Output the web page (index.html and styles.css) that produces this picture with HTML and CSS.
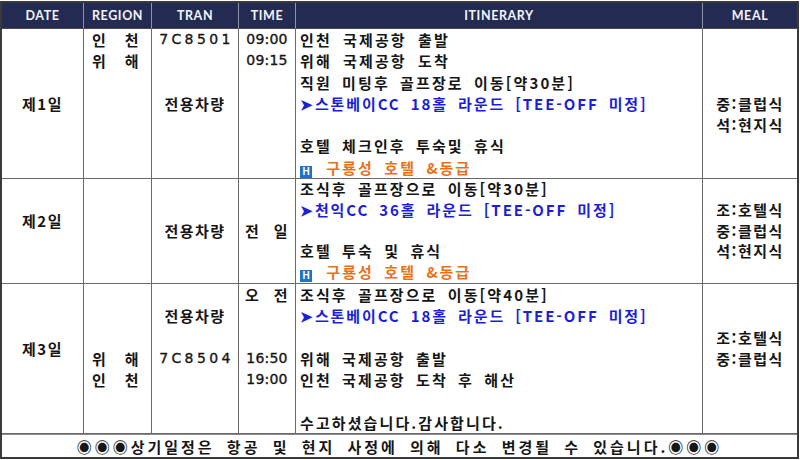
FILE: index.html
```html
<!DOCTYPE html>
<html lang="ko">
<head>
<meta charset="utf-8">
<title>일정표</title>
<link rel="stylesheet" href="styles.css">
</head>
<body>
<table class="sched">
  <colgroup>
    <col class="c-date"><col class="c-region"><col class="c-tran"><col class="c-time"><col class="c-itin"><col class="c-meal">
  </colgroup>
  <thead>
    <tr class="head">
      <th>DATE</th><th>REGION</th><th>TRAN</th><th>TIME</th><th>ITINERARY</th><th class="last">MEAL</th>
    </tr>
  </thead>
  <tbody>
    <tr class="r1">
      <td class="date">제1일</td>
      <td class="region">
        <div class="ln spread"><span>인</span><span>천</span></div>
        <div class="ln spread"><span>위</span><span>해</span></div>
      </td>
      <td class="tran">
        <div class="ln num">7C8501</div>
        <div class="ln"></div>
        <div class="ln"></div>
        <div class="ln">전용차량</div>
      </td>
      <td class="time">
        <div class="ln tnum">09:00</div>
        <div class="ln tnum">09:15</div>
      </td>
      <td class="itin">
        <div class="ln wide">인천 국제공항 출발</div>
        <div class="ln wide">위해 국제공항 도착</div>
        <div class="ln">직원 미팅후 골프장로 이동[약30분]</div>
        <div class="ln blue">➤스톤베이CC 18홀 라운드 [TEE-OFF 미정]</div>
        <div class="ln"></div>
        <div class="ln">호텔 체크인후 투숙및 휴식</div>
        <div class="ln orange"><span class="hicon">H</span> 구룡성 호텔 &amp;동급</div>
      </td>
      <td class="meal last">
        <div class="ln"></div>
        <div class="ln"></div>
        <div class="ln"></div>
        <div class="ln">중:클럽식</div>
        <div class="ln">석:현지식</div>
      </td>
    </tr>
    <tr class="r2">
      <td class="date shift">제2일</td>
      <td class="region"></td>
      <td class="tran">
        <div class="ln"></div>
        <div class="ln"></div>
        <div class="ln">전용차량</div>
      </td>
      <td class="time">
        <div class="ln"></div>
        <div class="ln"></div>
        <div class="ln spread tsp"><span>전</span><span>일</span></div>
      </td>
      <td class="itin">
        <div class="ln">조식후 골프장으로 이동[약30분]</div>
        <div class="ln blue">➤천익CC 36홀 라운드 [TEE-OFF 미정]</div>
        <div class="ln"></div>
        <div class="ln">호텔 투숙 및 휴식</div>
        <div class="ln orange"><span class="hicon">H</span> 구룡성 호텔 &amp;동급</div>
      </td>
      <td class="meal last">
        <div class="ln"></div>
        <div class="ln">조:호텔식</div>
        <div class="ln">중:클럽식</div>
        <div class="ln">석:현지식</div>
      </td>
    </tr>
    <tr class="r3">
      <td class="date shift">제3일</td>
      <td class="region">
        <div class="ln"></div>
        <div class="ln"></div>
        <div class="ln"></div>
        <div class="ln spread"><span>위</span><span>해</span></div>
        <div class="ln spread"><span>인</span><span>천</span></div>
      </td>
      <td class="tran">
        <div class="ln"></div>
        <div class="ln">전용차량</div>
        <div class="ln"></div>
        <div class="ln num">7C8504</div>
      </td>
      <td class="time">
        <div class="ln spread tsp"><span>오</span><span>전</span></div>
        <div class="ln"></div>
        <div class="ln"></div>
        <div class="ln tnum">16:50</div>
        <div class="ln tnum">19:00</div>
      </td>
      <td class="itin">
        <div class="ln">조식후 골프장으로 이동[약40분]</div>
        <div class="ln blue">➤스톤베이CC 18홀 라운드 [TEE-OFF 미정]</div>
        <div class="ln"></div>
        <div class="ln">위해 국제공항 출발</div>
        <div class="ln">인천 국제공항 도착 후 해산</div>
        <div class="ln"></div>
        <div class="ln">수고하셨습니다.감사합니다.</div>
      </td>
      <td class="meal last">
        <div class="ln"></div>
        <div class="ln"></div>
        <div class="ln">조:호텔식</div>
        <div class="ln">중:클럽식</div>
      </td>
    </tr>
  </tbody>
  <tfoot>
    <tr class="footrow">
      <td colspan="6" class="foot last">◉◉◉상기일정은 항공 및 현지 사정에 의해 다소 변경될 수 있습니다.◉◉◉</td>
    </tr>
  </tfoot>
</table>
</body>
</html>
```
FILE: styles.css
```css
html, body {
  margin: 0;
  padding: 0;
  background: #ffffff;
}

body {
  font-family: "Noto Sans CJK KR", "Noto Sans", sans-serif;
  font-weight: 700;
  font-size: 15px;
  color: #161616;
}

.sched {
  margin-top: 1px;
  width: 799px;
  table-layout: fixed;
  border-collapse: separate;
  border-spacing: 0;
  border: 2px solid #3a3a3a;
}

.c-date { width: 82px; }
.c-region { width: 68px; }
.c-tran { width: 87px; }
.c-time { width: 57px; }
.c-itin { width: 407px; }
.c-meal { width: 94px; }

.head {
  height: 26px;
}

.sched th {
  padding: 0;
  background: #242b52;
  color: #f4f4f8;
  font-family: "Lato", "Open Sans", sans-serif;
  font-weight: 700;
  font-size: 12.5px;
  letter-spacing: 0.6px;
  text-align: center;
  vertical-align: middle;
  border-right: 1px solid #8e90a3;
  border-bottom: 1px solid #4a4a4a;
}

.sched td {
  padding: 0;
  vertical-align: top;
  text-align: center;
  border-right: 1px solid #6a6a6a;
  border-bottom: 1px solid #6a6a6a;
  letter-spacing: 1.5px;
}

.sched .last {
  border-right: none;
}

.ln {
  height: 21.3px;
  line-height: 21.3px;
  white-space: nowrap;
}

.r2 .ln {
  height: 20.8px;
  line-height: 20.8px;
}

.sched td.date {
  vertical-align: middle;
}

.sched td.date.shift {
  padding-bottom: 21px;
}

.spread {
  display: flex;
  justify-content: space-between;
  padding: 0 11px 0 8px;
}

.tsp {
  padding: 0 6px 0 6px;
}

.num {
  font-family: "DejaVu Sans", sans-serif;
  font-weight: 400;
  font-size: 14px;
  letter-spacing: 3.4px;
  padding-left: 3px;
  -webkit-text-stroke: 0.35px #161616;
}

.tnum {
  font-family: "DejaVu Sans", sans-serif;
  font-weight: 400;
  font-size: 14px;
  letter-spacing: 0.2px;
  -webkit-text-stroke: 0.35px #161616;
}

.sched td.itin {
  text-align: left;
  padding-left: 4px;
  letter-spacing: 2.1px;
  word-spacing: 4px;
}

.wide {
  word-spacing: 5px;
}

.blue {
  color: #1b1fd8;
  letter-spacing: 1.9px;
}

.orange {
  color: #e8721c;
}

.hicon {
  display: inline-block;
  width: 12px;
  height: 12px;
  line-height: 12px;
  background: #1e73c4;
  color: #ffffff;
  font-family: "Liberation Sans", sans-serif;
  font-size: 10px;
  font-weight: 700;
  text-align: center;
  letter-spacing: 0;
  vertical-align: -1px;
  margin-right: 4px;
}

.footrow {
  height: 23px;
}

.sched td.foot {
  vertical-align: middle;
  text-align: center;
  border-bottom: none;
  border-top: 1px solid #8a8a8a;
  letter-spacing: 3px;
  word-spacing: 5px;
}
```
